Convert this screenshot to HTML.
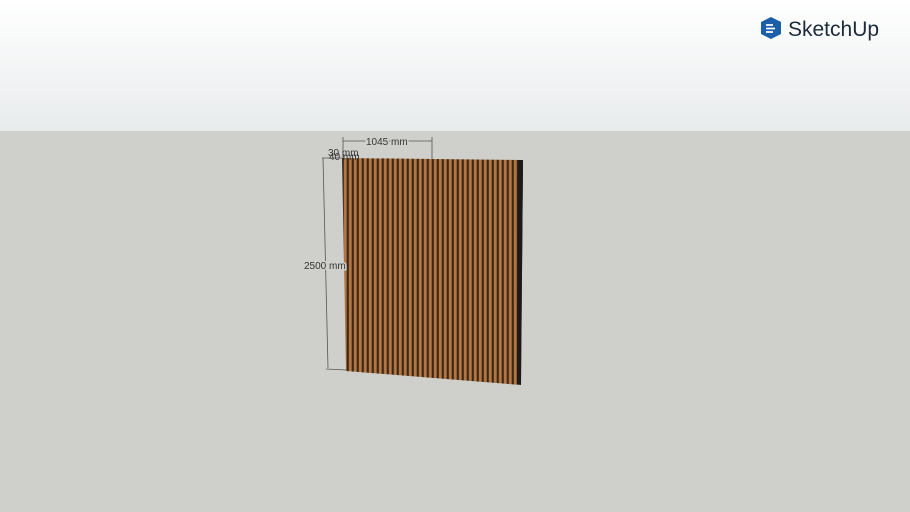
<!DOCTYPE html>
<html><head><style>
body{margin:0;width:910px;height:512px;overflow:hidden;font-family:"Liberation Sans",sans-serif}
.sky{position:absolute;left:0;top:0;width:910px;height:131px;background:linear-gradient(#ffffff,#e8ebec)}
.gnd{position:absolute;left:0;top:131px;width:910px;height:381px;background:#cfcfcb}
</style></head><body>
<div class="sky"></div><div class="gnd"></div>
<svg width="910" height="512" style="position:absolute;left:0;top:0">
<defs>
<pattern id="s" x="343" y="0" width="5" height="10" patternUnits="userSpaceOnUse">
<rect width="5" height="10" fill="#3a2818"/>
<rect x="0.8" width="3" height="10" fill="#a66c3a"/>
<rect x="1.5" width="1.2" height="10" fill="#b87c46"/>
</pattern>
</defs>
<polygon points="342,158 523,160 521,385 346,371" fill="url(#s)"/>
<polygon points="518,160 523,160 521,385 517,384" fill="#1a1a1a"/>
<g stroke="#555" stroke-width="0.8" fill="none">
<line x1="343" y1="141" x2="432" y2="141"/>
<line x1="343" y1="137" x2="343" y2="158"/>
<line x1="432" y1="137" x2="432" y2="160"/>
<line x1="322" y1="158" x2="342" y2="158"/>
<line x1="326" y1="369" x2="346" y2="370"/>
<line x1="323" y1="158" x2="328" y2="368"/>
</g>
<g font-size="10" fill="#333" font-family="Liberation Sans,sans-serif">
<text x="366" y="145" style="paint-order:stroke" stroke="#cfcfcb" stroke-width="3">1045 mm</text>
<text x="328" y="156">30 mm</text>
<text x="329" y="160">40 mm</text>
<text x="304" y="269" style="paint-order:stroke" stroke="#cfcfcb" stroke-width="3">2500 mm</text>
</g>
<g transform="translate(761,17)">
<path d="M10 0 L20 5 L20 17 L10 22 L0 17 L0 5 Z" fill="#1a5fa8"/>
<path d="M5 8 L12 8 M5 11.5 L14 11.5 M5 15 L12 15" stroke="#fff" stroke-width="1.8" fill="none"/>
</g>
<text x="788" y="36" font-size="21" fill="#1d2a3a" font-family="Liberation Sans,sans-serif">SketchUp</text>
</svg>
</body></html>
